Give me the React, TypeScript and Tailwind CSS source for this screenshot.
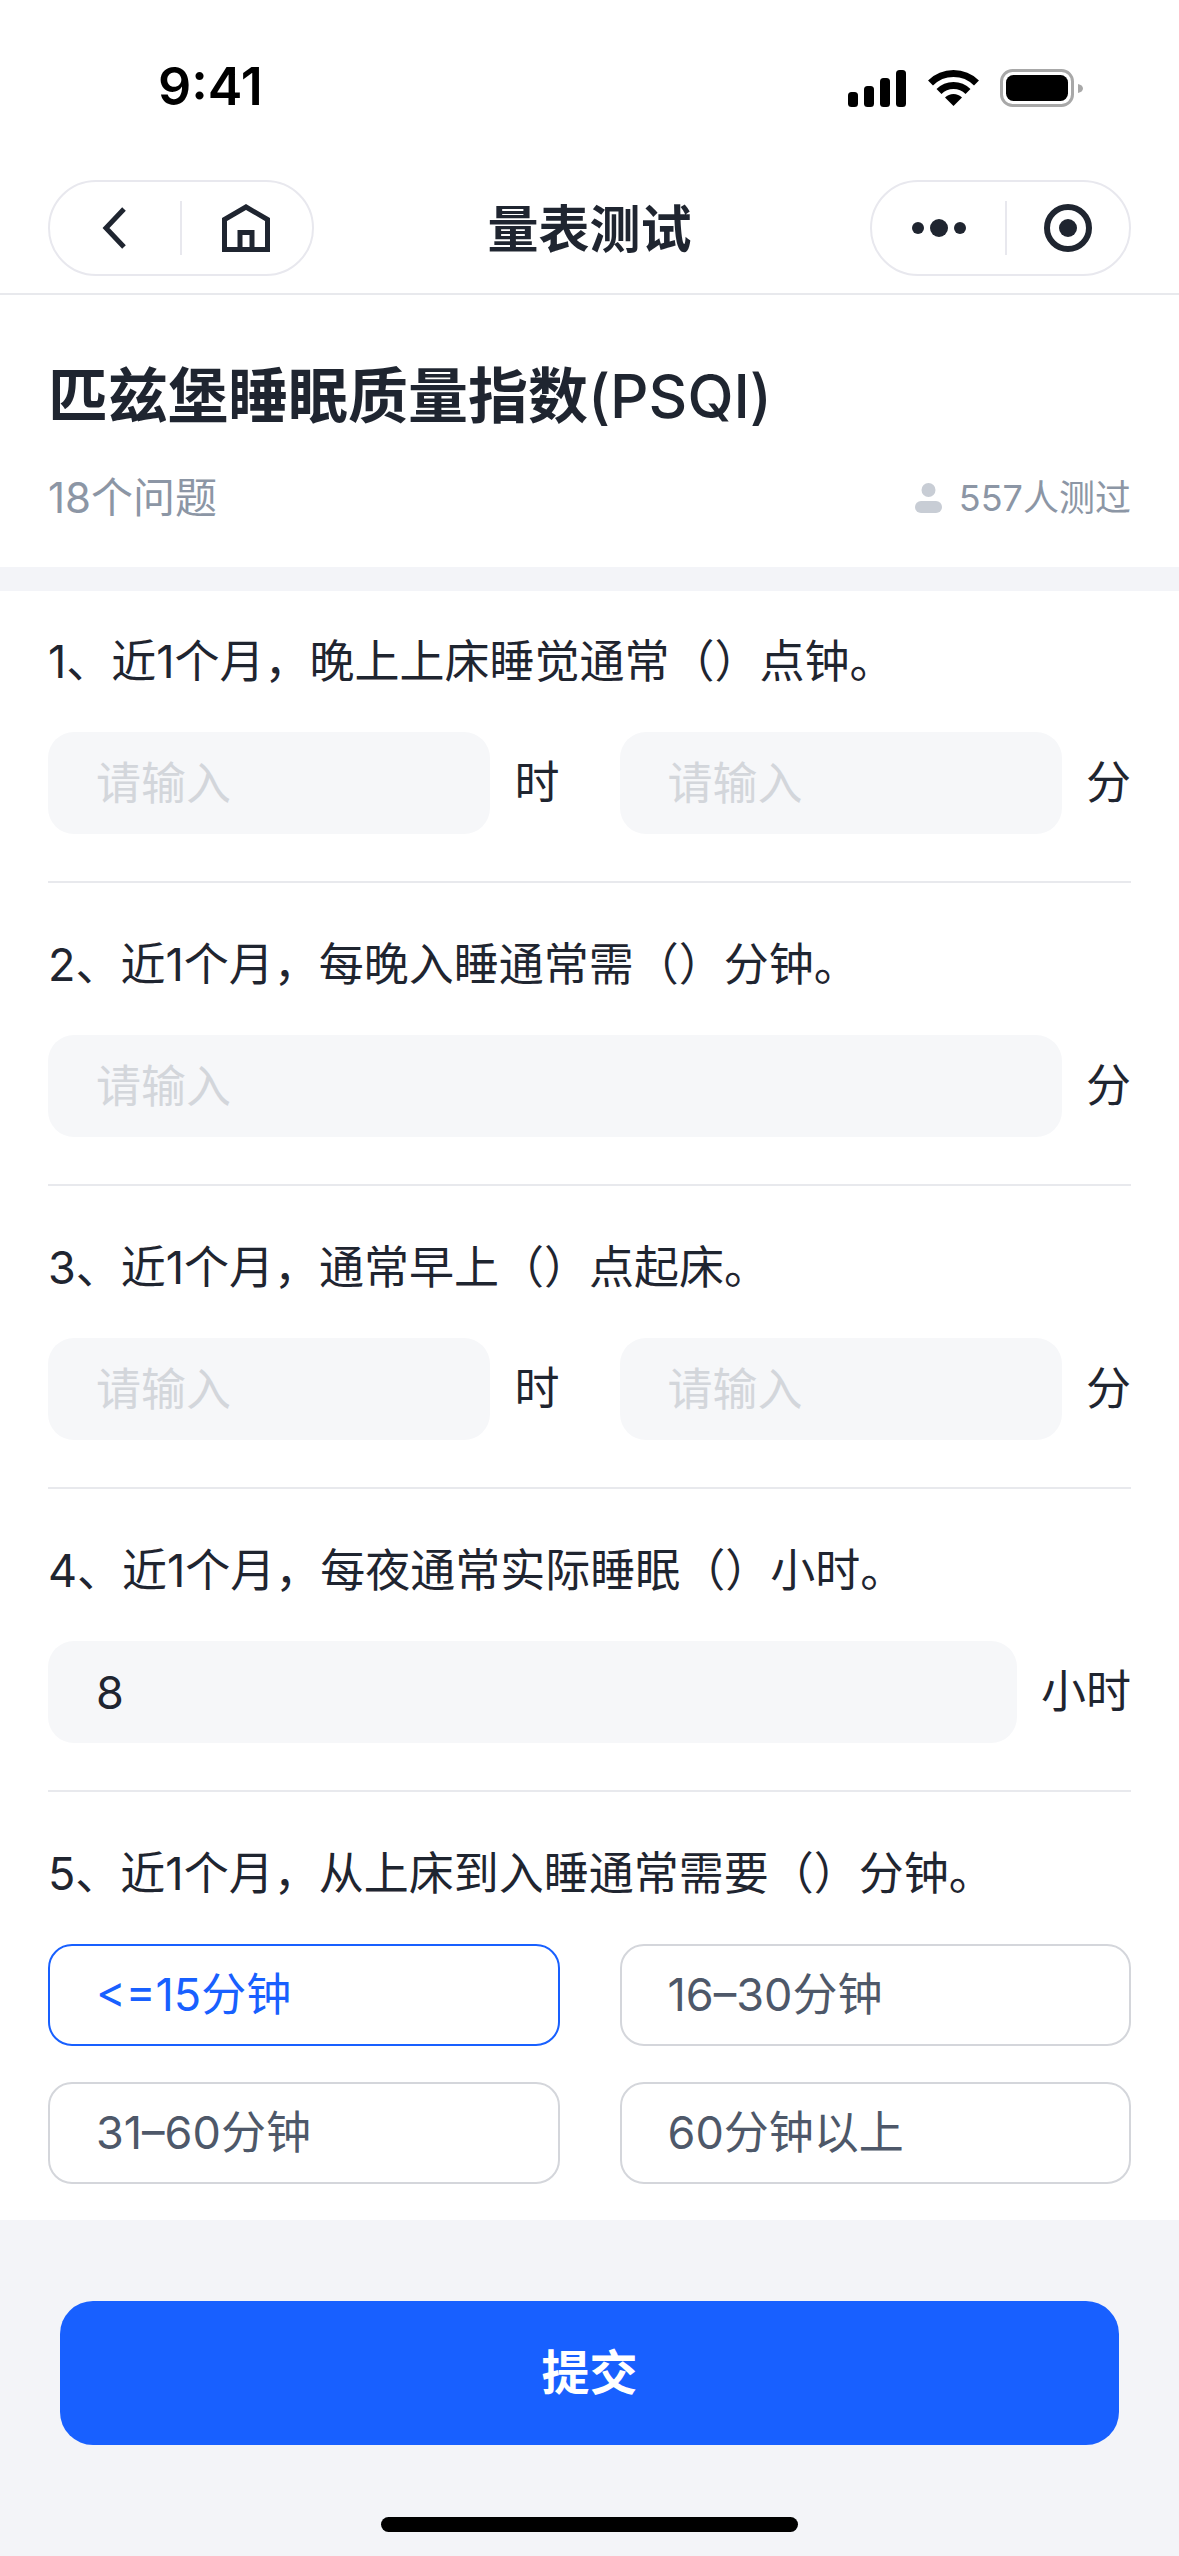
const FONT = "font-['Inter','Noto_Sans_CJK_SC',sans-serif]";

function StatusBar() {
  return (
    <div className="flex h-[180px] items-start justify-between pl-[158px] pr-[96px] pt-[56px]">
      <span className="text-[52px] font-semibold leading-[62px] text-black">9:41</span>
      <div className="flex items-center gap-[22px] pt-[13px]">
        {/* signal */}
        <svg width="59" height="38" viewBox="0 0 59 38" fill="#000">
          <rect x="1" y="23" width="10" height="15" rx="3.5" />
          <rect x="17" y="17" width="10" height="21" rx="3.5" />
          <rect x="33" y="9" width="10" height="29" rx="3.5" />
          <rect x="49" y="1" width="10" height="37" rx="3.5" />
        </svg>
        {/* wifi */}
        <svg width="51" height="36" viewBox="0 0 51 36" fill="none" stroke="#000" strokeWidth="7">
          <path d="M2.52 13.02A32.5 32.5 0 0 1 48.48 13.02" />
          <path d="M11 21.5A20.5 20.5 0 0 1 40 21.5" />
          <path d="M25.5 36L17 27.5A12 12 0 0 1 34 27.5Z" fill="#000" stroke="none" />
        </svg>
        {/* battery */}
        <svg width="83" height="38" viewBox="0 0 83 38" className="-ml-[1px]">
          <rect x="1.5" y="1.5" width="71" height="35" rx="11" fill="none" stroke="#a8a8a8" strokeWidth="3" />
          <rect x="6" y="6" width="62" height="26" rx="7.5" fill="#000" />
          <path d="M78 15c3 .6 5 2.2 5 4.500s-2 3.900-5 4.500z" fill="#a8a8a8" />
        </svg>
      </div>
    </div>
  );
}

function NavBar() {
  return (
    <div className="grid h-[115px] grid-cols-[1fr_auto_1fr] items-start border-b-[2px] border-[#e8e9ed] px-[48px]">
      <div className="flex h-[96px] w-[266px] items-center rounded-full border-[2px] border-[#e8e8ee]">
        <div className="flex w-[130px] justify-center">
          <svg width="26" height="44" viewBox="0 0 26 44" fill="none" stroke="#1f2530" strokeWidth="5">
            <path d="M22 3L4 22L22 41" />
          </svg>
        </div>
        <div className="h-[54px] w-[2px] bg-[#e8e8ee]" />
        <div className="flex flex-1 justify-center pr-[2px]">
          <svg width="48" height="48" viewBox="0 0 48 48" fill="none" stroke="#1f2530" strokeWidth="5">
            <path d="M24 3L2.500 15.500V45.500H45.500V15.500Z" />
            <path d="M18 45V28.500H30V45" />
          </svg>
        </div>
      </div>
      <h1 className="text-[51px] font-semibold leading-[100px] text-[#1f2530]">量表测试</h1>
      <div className="flex h-[96px] w-[261px] items-center justify-self-end rounded-full border-[2px] border-[#e8e8ee]">
        <div className="flex w-[133px] justify-center">
          <svg width="54" height="18" viewBox="0 0 54 18" fill="#1f2530">
            <circle cx="6" cy="9" r="6" />
            <circle cx="27" cy="9" r="9" />
            <circle cx="48" cy="9" r="6" />
          </svg>
        </div>
        <div className="h-[54px] w-[2px] bg-[#e8e8ee]" />
        <div className="flex flex-1 justify-center">
          <svg width="48" height="48" viewBox="0 0 48 48">
            <circle cx="24" cy="24" r="21" fill="none" stroke="#1f2530" strokeWidth="6" />
            <circle cx="24" cy="24" r="9" fill="#1f2530" />
          </svg>
        </div>
      </div>
    </div>
  );
}

function TextInput({ value }: { value?: string }) {
  return (
    <input
      readOnly
      value={value}
      placeholder="请输入"
      className="h-[102px] w-0 flex-1 rounded-[26px] bg-[#f6f7f9] px-[48px] text-[45px] text-[#1f2530] outline-none placeholder:text-[#d3d6db]"
    />
  );
}

function Field({ unit, value }: { unit: string; value?: string }) {
  return (
    <div className="flex items-center gap-[24px]">
      <TextInput value={value} />
      <span className="text-[45px] leading-[60px] text-[#1f2530]">{unit}</span>
    </div>
  );
}

function Question({ title, children }: { title: string; children: React.ReactNode }) {
  return (
    <section className="border-b-[2px] border-[#e8e9ed] pb-[47px] pt-[52px] first:pt-[41px] last:border-b-0 last:pb-[36px]">
      <h2 className="mb-[40px] text-[45px] font-normal leading-[60px] text-[#1f2530]">{title}</h2>
      {children}
    </section>
  );
}

function Option({ label, selected }: { label: string; selected?: boolean }) {
  return (
    <button
      className={
        selected
          ? 'h-[102px] rounded-[24px] border-[2px] border-[#1860ff] px-[46px] text-left text-[45px] text-[#1860ff]'
          : 'h-[102px] rounded-[24px] border-[2px] border-[#d4d6db] px-[46px] text-left text-[45px] text-[#4e5869]'
      }
    >
      {label}
    </button>
  );
}

export default function App() {
  return (
    <div className={`${FONT} flex h-[2556px] w-[1179px] flex-col overflow-hidden bg-[#f3f4f8]`}>
      <div className="bg-white">
        <StatusBar />
        <NavBar />

        {/* Scale info */}
        <div className="px-[48px] pb-[39px] pt-[61px]">
          <div className="text-[60px] font-semibold leading-[80px] text-[#1f2530]">
            匹兹堡睡眠质量指数<span className="font-medium">(PSQI)</span>
          </div>
          <div className="mt-[32px] flex items-center justify-between leading-[60px]">
            <span className="text-[42px] text-[#8c96a5]">18个问题</span>
            <div className="flex items-center gap-[17px]">
              <svg width="27" height="30" viewBox="0 0 27 30" fill="#c8cdd5">
                <circle cx="13.500" cy="7" r="7" />
                <rect x="0" y="18" width="27" height="12" rx="6" />
              </svg>
              <span className="text-[36px] text-[#8c96a5]">557人测过</span>
            </div>
          </div>
        </div>
      </div>

      {/* Questions */}
      <div className="mt-[24px] bg-white px-[48px]">
        <Question title={'1、近1个月\uFF0C晚上上床睡觉通常\uFF08\uFF09点钟。'}>
          <div className="grid grid-cols-2 gap-x-[60px]">
            <Field unit="时" />
            <Field unit="分" />
          </div>
        </Question>
        <Question title={'2、近1个月\uFF0C每晚入睡通常需\uFF08\uFF09分钟。'}>
          <Field unit="分" />
        </Question>
        <Question title={'3、近1个月\uFF0C通常早上\uFF08\uFF09点起床。'}>
          <div className="grid grid-cols-2 gap-x-[60px]">
            <Field unit="时" />
            <Field unit="分" />
          </div>
        </Question>
        <Question title={'4、近1个月\uFF0C每夜通常实际睡眠\uFF08\uFF09小时。'}>
          <Field unit="小时" value="8" />
        </Question>
        <Question title={'5、近1个月\uFF0C从上床到入睡通常需要\uFF08\uFF09分钟。'}>
          <div className="grid grid-cols-2 gap-x-[60px] gap-y-[36px]">
            <Option label="<=15分钟" selected />
            <Option label="16–30分钟" />
            <Option label="31–60分钟" />
            <Option label="60分钟以上" />
          </div>
        </Question>
      </div>

      {/* Footer */}
      <div className="flex flex-1 flex-col items-center pt-[81px]">
        <button className="h-[144px] w-[1059px] rounded-[33px] bg-[#1860ff] text-[48px] font-semibold text-white">提交</button>
        <div className="mt-[72px] h-[15px] w-[417px] rounded-full bg-black" />
      </div>
    </div>
  );
}
